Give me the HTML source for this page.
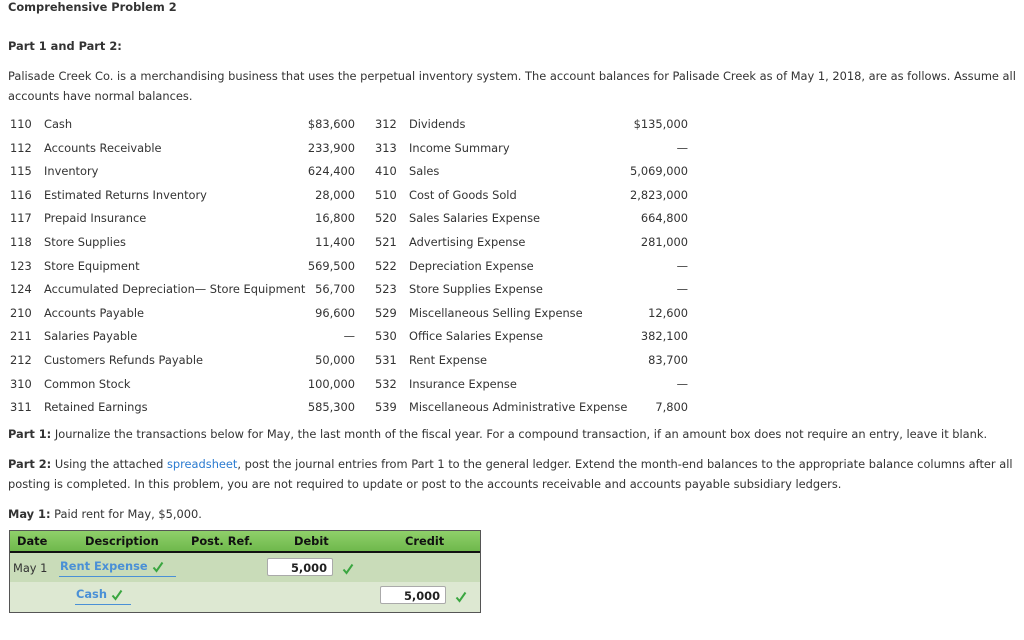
<!DOCTYPE html><html><head><meta charset="utf-8"><style>
body{margin:0;width:1024px;height:640px;background:#fff;font-family:"DejaVu Sans","Liberation Sans",sans-serif;font-size:11.4px;color:#333;position:relative;overflow:hidden}
.a{position:absolute;white-space:nowrap}
.r{position:absolute;white-space:nowrap;text-align:right}
b{color:#333}
.lnk{color:#2b7bd0}
.chk{display:inline-block;vertical-align:middle}
</style></head><body>
<div class="a" style="left:8px;top:0px;font-weight:bold">Comprehensive Problem 2</div>
<div class="a" style="left:8px;top:39px;font-weight:bold">Part 1 and Part 2:</div>
<div class="a" style="left:8px;top:69px">Palisade Creek Co. is a merchandising business that uses the perpetual inventory system. The account balances for Palisade Creek as of May 1, 2018, are as follows. Assume all</div>
<div class="a" style="left:8px;top:89px">accounts have normal balances.</div>

<div id="t"></div>
<script>
var L=[["110","Cash","$83,600"],["112","Accounts Receivable","233,900"],["115","Inventory","624,400"],["116","Estimated Returns Inventory","28,000"],["117","Prepaid Insurance","16,800"],["118","Store Supplies","11,400"],["123","Store Equipment","569,500"],["124","Accumulated Depreciation— Store Equipment","56,700"],["210","Accounts Payable","96,600"],["211","Salaries Payable","—"],["212","Customers Refunds Payable","50,000"],["310","Common Stock","100,000"],["311","Retained Earnings","585,300"]];
var R=[["312","Dividends","$135,000"],["313","Income Summary","—"],["410","Sales","5,069,000"],["510","Cost of Goods Sold","2,823,000"],["520","Sales Salaries Expense","664,800"],["521","Advertising Expense","281,000"],["522","Depreciation Expense","—"],["523","Store Supplies Expense","—"],["529","Miscellaneous Selling Expense","12,600"],["530","Office Salaries Expense","382,100"],["531","Rent Expense","83,700"],["532","Insurance Expense","—"],["539","Miscellaneous Administrative Expense","7,800"]];
var h="";
for(var i=0;i<13;i++){var y=117+i*23.6;
h+='<div class="a" style="left:10px;top:'+y+'px">'+L[i][0]+'</div><div class="a" style="left:44px;top:'+y+'px">'+L[i][1]+'</div><div class="r" style="right:669px;top:'+y+'px">'+L[i][2]+'</div>';
h+='<div class="a" style="left:375px;top:'+y+'px">'+R[i][0]+'</div><div class="a" style="left:409px;top:'+y+'px">'+R[i][1]+'</div><div class="r" style="right:336px;top:'+y+'px">'+R[i][2]+'</div>';}
document.getElementById("t").innerHTML=h;
</script>
<div class="a" style="left:8px;top:427px"><b>Part 1:</b> Journalize the transactions below for May, the last month of the fiscal year. For a compound transaction, if an amount box does not require an entry, leave it blank.</div>
<div class="a" style="left:8px;top:457px"><b>Part 2:</b> Using the attached <span class="lnk">spreadsheet</span>, post the journal entries from Part 1 to the general ledger. Extend the month-end balances to the appropriate balance columns after all</div>
<div class="a" style="left:8px;top:477px">posting is completed. In this problem, you are not required to update or post to the accounts receivable and accounts payable subsidiary ledgers.</div>
<div class="a" style="left:8px;top:507px"><b>May 1:</b> Paid rent for May, $5,000.</div>

<div style="position:absolute;left:9px;top:530px;width:470px;height:81px;border:1px solid #555;background:#dde8d2">
 <div style="position:absolute;left:0;top:0;width:470px;height:20px;background:linear-gradient(#8fd06a,#6fb84c);border-bottom:2px solid #111"></div>
 <div class="a" style="left:7px;top:3px;font-weight:bold;color:#111">Date</div>
 <div class="a" style="left:75px;top:3px;font-weight:bold;color:#111">Description</div>
 <div class="a" style="left:181px;top:3px;font-weight:bold;color:#111">Post. Ref.</div>
 <div class="a" style="left:284px;top:3px;font-weight:bold;color:#111">Debit</div>
 <div class="a" style="left:395px;top:3px;font-weight:bold;color:#111">Credit</div>
 <div style="position:absolute;left:0;top:22px;width:470px;height:29px;background:#c9dcb9"></div>
 <div class="a" style="left:3px;top:30px">May 1</div>
 <div class="a" style="left:49px;top:28px;width:116px;border-bottom:1px solid #4a90d6;padding-bottom:3px;padding-left:1px;font-weight:bold;color:#4a90d6">Rent Expense <svg class="chk" width="12" height="12" viewBox="0 0 12 12"><path d="M1.5 6.5 L4.5 10 L10.5 1.5" stroke="#3aa640" stroke-width="2" fill="none"/></svg></div>
 <div style="position:absolute;left:257px;top:27px;width:66px;height:18px;background:#fff;border:1px solid #aaa;border-radius:2px;font-weight:bold;text-align:right;line-height:18px;padding-right:5px;box-sizing:border-box;color:#222">5,000</div>
 <div class="a" style="left:332px;top:30px"><svg class="chk" width="12" height="12" viewBox="0 0 12 12"><path d="M1.5 6.5 L4.5 10 L10.5 1.5" stroke="#3aa640" stroke-width="2" fill="none"/></svg></div>
 <div class="a" style="left:65px;top:56px;width:55px;border-bottom:1px solid #4a90d6;padding-bottom:3px;padding-left:1px;font-weight:bold;color:#4a90d6">Cash <svg class="chk" width="12" height="12" viewBox="0 0 12 12"><path d="M1.5 6.5 L4.5 10 L10.5 1.5" stroke="#3aa640" stroke-width="2" fill="none"/></svg></div>
 <div style="position:absolute;left:370px;top:55px;width:66px;height:18px;background:#fff;border:1px solid #aaa;border-radius:2px;font-weight:bold;text-align:right;line-height:18px;padding-right:5px;box-sizing:border-box;color:#222">5,000</div>
 <div class="a" style="left:445px;top:58px"><svg class="chk" width="12" height="12" viewBox="0 0 12 12"><path d="M1.5 6.5 L4.5 10 L10.5 1.5" stroke="#3aa640" stroke-width="2" fill="none"/></svg></div>
</div>
</body></html>
